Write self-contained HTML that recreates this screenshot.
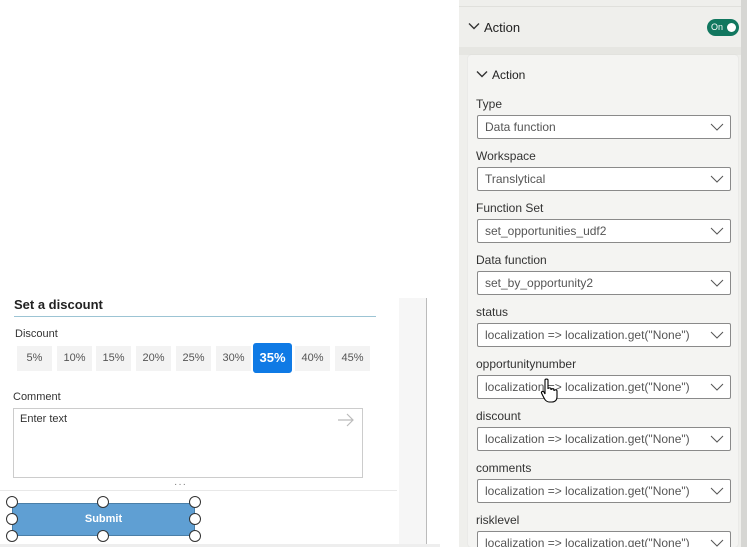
<!DOCTYPE html>
<html><head><style>
*{margin:0;padding:0;box-sizing:border-box}
html,body{width:755px;height:547px;overflow:hidden}
body{background:#fff;font-family:"Liberation Sans",sans-serif;position:relative;color:#333}
.a{position:absolute}
.chip{position:absolute;top:346px;width:35px;height:25px;background:#f3f3f3;font-size:11px;color:#555;text-align:center;line-height:25px}
.lab{position:absolute;left:476px;font-size:12px;color:#333}
.box{position:absolute;left:477px;width:254px;height:24px;background:#fff;border:1px solid #8a8a8a;border-radius:2px;font-size:12px;color:#555;padding-left:7px;line-height:22px;overflow:hidden}
.box svg{position:absolute;right:6px;top:7px}
.h{position:absolute;border:1.5px solid #333;border-radius:50%;width:12px;height:12px;background:#fff}
</style></head><body>
<div class="a" style="left:399px;top:298px;width:27px;height:249px;background:#f6f6f6"></div>
<div class="a" style="left:426px;top:298px;width:1px;height:249px;background:#bbb"></div>
<div class="a" style="left:14px;top:297px;font-size:13px;font-weight:bold;color:#222">Set a discount</div>
<div class="a" style="left:14px;top:316px;width:362px;height:1px;background:#9cc4d4"></div>
<div class="a" style="left:15px;top:328px;font-size:11px;color:#333">Discount</div>
<div class="chip" style="left:17px">5%</div>
<div class="chip" style="left:57px">10%</div>
<div class="chip" style="left:96px">15%</div>
<div class="chip" style="left:136px">20%</div>
<div class="chip" style="left:176px">25%</div>
<div class="chip" style="left:216px">30%</div>
<div class="chip" style="left:253px;top:343px;width:39px;height:30px;line-height:30px;background:#0f7ae5;color:#fff;font-size:13px;font-weight:bold;border-radius:3px">35%</div>
<div class="chip" style="left:295px">40%</div>
<div class="chip" style="left:335px">45%</div>
<div class="a" style="left:13px;top:391px;font-size:11px;color:#333">Comment</div>
<div class="a" style="left:13px;top:408px;width:350px;height:70px;border:1px solid #ccc"></div>
<div class="a" style="left:20px;top:413px;font-size:11px;color:#333">Enter text</div>
<svg class="a" style="left:337px;top:413px" width="18" height="14"><path d="M1 7H16M10 1L16 7L10 13" stroke="#bbb" fill="none" stroke-width="1.2"/></svg>
<div class="a" style="left:0;top:490px;width:397px;height:1px;background:#e8e8e8"></div>
<div class="a" style="left:174px;top:479px;font-size:10px;color:#777;letter-spacing:1px">···</div>
<div class="a" style="left:12px;top:503px;width:183px;height:33px;background:#5f9fd3;border:1px solid #4a7fa8;color:#fff;font-weight:bold;font-size:11px;text-align:center;line-height:31px">Submit</div>
<div class="h" style="left:6px;top:496px"></div><div class="h" style="left:97px;top:496px"></div><div class="h" style="left:189px;top:496px"></div>
<div class="h" style="left:6px;top:513px"></div><div class="h" style="left:189px;top:513px"></div>
<div class="h" style="left:6px;top:530px"></div><div class="h" style="left:97px;top:530px"></div><div class="h" style="left:189px;top:530px"></div>
<div class="a" style="left:0;top:544px;width:440px;height:3px;background:#eee"></div>
<div class="a" style="left:459px;top:0;width:282px;height:547px;background:#efefec"></div>
<div class="a" style="left:459px;top:6px;width:282px;height:1px;background:#e0e0dc"></div>
<div class="a" style="left:459px;top:47px;width:282px;height:8px;background:#e6e6e2"></div>
<div class="a" style="left:741px;top:0;width:6px;height:547px;background:#d6d6d3"></div>
<svg class="a" style="left:468px;top:22px" width="12" height="9"><path d="M1 1.5L6 6.5L11 1.5" stroke="#333" fill="none" stroke-width="1.4"/></svg>
<div class="a" style="left:484px;top:20px;font-size:13px;color:#222">Action</div>
<div class="a" style="left:707px;top:19px;width:32px;height:17px;border-radius:9px;background:#11775f"></div>
<div class="a" style="left:711px;top:22px;font-size:9px;color:#fff">On</div>
<div class="a" style="left:727px;top:23px;width:9px;height:9px;border-radius:50%;background:#fff"></div>
<div class="a" style="left:468px;top:55px;width:270px;height:492px;background:#f4f4f2;border-radius:3px;box-shadow:0 0 1px #ccc"></div>
<svg class="a" style="left:476px;top:70px" width="12" height="9"><path d="M1 1.5L6 6.5L11 1.5" stroke="#333" fill="none" stroke-width="1.4"/></svg>
<div class="a" style="left:492px;top:68px;font-size:12px;color:#222">Action</div>
<div class="lab" style="top:97px">Type</div>
<div class="box" style="top:115px">Data function<svg width="14" height="9"><path d="M1 1L7 7L13 1" stroke="#555" fill="none"/></svg></div>
<div class="lab" style="top:149px">Workspace</div>
<div class="box" style="top:167px">Translytical<svg width="14" height="9"><path d="M1 1L7 7L13 1" stroke="#555" fill="none"/></svg></div>
<div class="lab" style="top:201px">Function Set</div>
<div class="box" style="top:219px">set_opportunities_udf2<svg width="14" height="9"><path d="M1 1L7 7L13 1" stroke="#555" fill="none"/></svg></div>
<div class="lab" style="top:253px">Data function</div>
<div class="box" style="top:271px">set_by_opportunity2<svg width="14" height="9"><path d="M1 1L7 7L13 1" stroke="#555" fill="none"/></svg></div>
<div class="lab" style="top:305px">status</div>
<div class="box" style="top:323px">localization =&gt; localization.get("None")<svg width="14" height="9"><path d="M1 1L7 7L13 1" stroke="#555" fill="none"/></svg></div>
<div class="lab" style="top:357px">opportunitynumber</div>
<div class="box" style="top:375px">localization =&gt; localization.get("None")<svg width="14" height="9"><path d="M1 1L7 7L13 1" stroke="#555" fill="none"/></svg></div>
<div class="lab" style="top:409px">discount</div>
<div class="box" style="top:427px">localization =&gt; localization.get("None")<svg width="14" height="9"><path d="M1 1L7 7L13 1" stroke="#555" fill="none"/></svg></div>
<div class="lab" style="top:461px">comments</div>
<div class="box" style="top:479px">localization =&gt; localization.get("None")<svg width="14" height="9"><path d="M1 1L7 7L13 1" stroke="#555" fill="none"/></svg></div>
<div class="lab" style="top:513px">risklevel</div>
<div class="box" style="top:531px">localization =&gt; localization.get("None")<svg width="14" height="9"><path d="M1 1L7 7L13 1" stroke="#555" fill="none"/></svg></div>
<svg class="a" style="left:540px;top:378px" width="20" height="26"><path d="M5 2C5 .8 8 .8 8 2V11C8 9.5 11 9.5 11 11V12C11 10.5 14 10.5 14 12V13C14 11.5 17 11.5 17 13V19C17 22 15 24 12 24H9C7 24 5 22 4 20L1.5 15C1 13.5 3 13 4 14L5 16Z" fill="#fff" stroke="#000" stroke-width="1.1"/></svg>
</body></html>
